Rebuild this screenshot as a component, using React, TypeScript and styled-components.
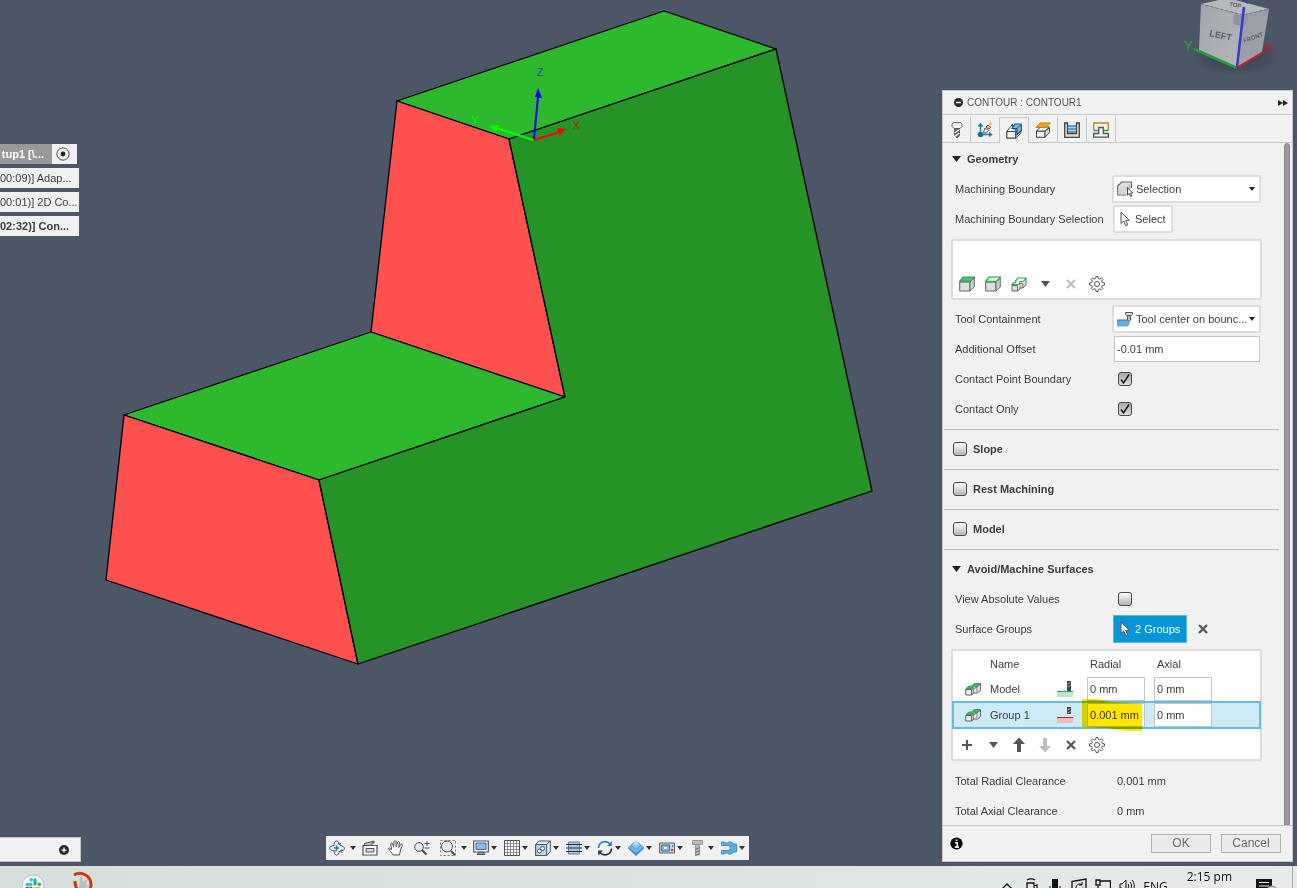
import React, { ReactNode } from 'react';
import styled, { createGlobalStyle, css } from 'styled-components';

const Global = createGlobalStyle`
  *, *::before, *::after { box-sizing: border-box; }
  body { margin: 0; background: #4c5667; }
  body, button, input, select {
    font-family: "Liberation Sans", Arial, sans-serif;
    font-size: 11px;
    color: #3c3c3c;
  }
  button { border: 0; padding: 0; background: none; cursor: pointer; }
  svg { display: block; flex: none; }
`;

/* ---------- page frame ---------- */

const App_ = styled.div`
  min-height: 100vh;
  display: flex;
  flex-direction: column;
  overflow: hidden;
`;

const Workspace = styled.main`
  position: relative;
  flex: 1;
  display: flex;
  background: #4c5667;
`;

const Scene = styled.svg`
  position: absolute;
  inset: 0;
  width: 100%;
  height: 100%;
`;

const Column = styled.div`
  position: relative;
  display: flex;
  flex-direction: column;
`;

const LeftColumn = styled(Column)`
  width: 81px;
  padding: 144px 0 4px;
  justify-content: space-between;
`;

const CenterColumn = styled(Column)`
  flex: 1;
  justify-content: flex-end;
  align-items: center;
  padding: 0 0 6px 52px;
`;

const RightColumn = styled(Column)`
  width: 355px;
  padding: 0 4px 4px 0;
`;

/* ---------- operations tree ---------- */

const Tree = styled.ul`
  list-style: none;
  margin: 0;
  padding: 0;
  display: grid;
  gap: 4px;
`;

const TreeRow = styled.li<{ $bold?: boolean; $setup?: boolean }>`
  width: ${p => (p.$setup ? 77 : 79)}px;
  height: 20px;
  display: flex;
  align-items: center;
  padding-right: ${p => (p.$setup ? 7 : 0)}px;
  overflow: hidden;
  white-space: nowrap;
  background: #f1f1f1;
  font-weight: ${p => (p.$bold ? 'bold' : 'normal')};
`;

const SetupName = styled.span`
  flex: 1;
  height: 20px;
  line-height: 20px;
  margin-right: 4px;
  padding-right: 8px;
  text-align: right;
  background: #999;
  color: #fff;
  font-weight: bold;
`;

const CommentsBar = styled.div`
  height: 25px;
  display: flex;
  align-items: center;
  justify-content: flex-end;
  padding-right: 11px;
  background: #f1f1f1;
  border: 1px solid #c4c4c4;
  border-left: 0;
`;

/* ---------- navigation toolbar ---------- */

const NavBar = styled.nav`
  display: flex;
  align-items: center;
  height: 24px;
  padding: 0 4px 0 3px;
  background: #f1f1f1;
`;

const NavButton = styled.button<{ $size?: 'plain' | 'wide' }>`
  display: flex;
  align-items: center;
  height: 24px;
  gap: ${p => (p.$size === 'wide' ? 5 : 2)}px;
  width: ${p => (p.$size === 'plain' ? 26 : p.$size === 'wide' ? 33 : 31)}px;
  &:last-child { width: auto; }
`;

/* ---------- contour panel ---------- */

const ViewCube = styled.svg`
  align-self: flex-end;
  margin-right: -4px;
`;

const Panel = styled.aside`
  display: flex;
  flex-direction: column;
  background: #f1f1f1;
  border: 1px solid #c8c8c8;
`;

const PanelHeader = styled.header`
  height: 24px;
  display: flex;
  align-items: center;
  gap: 4px;
  padding: 0 4px 0 11px;
  border-bottom: 1px solid #c8c8c8;
`;

const PanelTitle = styled.h1`
  flex: 1;
  margin: 0;
  font-size: 10px;
  font-weight: normal;
  color: #555;
`;

const Tabs = styled.div`
  height: 28px;
  display: flex;
  align-items: flex-end;
  box-shadow: inset 0 -1px #c8c8c8;
`;

const Tab = styled.button<{ $active?: boolean }>`
  width: 29px;
  height: 26px;
  display: grid;
  place-items: center;
  border-right: 1px solid #c8c8c8;
  &:first-child { width: 28px; }
  ${p =>
    p.$active &&
    css`
      background: #f1f1f1;
      border-top: 1px solid #c8c8c8;
    `}
`;

const PanelBody = styled.div`
  display: flex;
  justify-content: space-between;
`;

const Content = styled.div`
  width: 336px;
`;

const ScrollThumb = styled.div`
  width: 6px;
  margin-right: 2px;
  border-radius: 3px 3px 0 0;
  background: #999;
  border: 1px solid #8a8a8a;
`;

const Section = styled.section`
  padding: 1px 0 5px;
`;

const SectionTitle = styled.h2`
  height: 30px;
  margin: 0;
  padding-left: 9px;
  display: flex;
  align-items: center;
  gap: 6px;
  font-size: 11px;
  font-weight: bold;
`;

const ToggleSection = styled.label`
  height: 40px;
  display: flex;
  align-items: center;
  gap: 6px;
  margin-left: 1px;
  padding: 0 0 2px 9px;
  border-top: 1px solid #c0c0c0;
  font-weight: bold;
`;

const LastSection = styled(Section)`
  margin-left: 1px;
  padding: 4px 0 0;
  border-top: 1px solid #c0c0c0;
  & > * { margin-left: -1px; }
`;

const Row = styled.div`
  height: 30px;
  display: grid;
  grid-template-columns: 157px 1fr;
  align-items: center;
  padding-left: 12px;
  white-space: nowrap;
`;

const Controls = styled.div<{ $inset?: number }>`
  display: flex;
  align-items: center;
  gap: 8px;
  padding-left: ${p => p.$inset ?? 0}px;
`;

const SelectFrame = styled.div`
  position: relative;
  width: 149px;
  height: 28px;
  background: #fff;
  border: 2px solid #dcdcdc;
  border-radius: 2px;
`;

const Select = styled.select`
  appearance: none;
  width: 100%;
  height: 24px;
  padding: 0 10px 0 22px;
  border: 0;
  background: transparent;
`;

const SelectIcon = styled.span`
  position: absolute;
  left: 3px;
  top: 4px;
  pointer-events: none;
`;

const SelectArrow = styled.span`
  position: absolute;
  right: 4px;
  top: 10px;
  pointer-events: none;
`;

const PickButton = styled.button<{ $on?: boolean }>`
  height: 28px;
  display: flex;
  align-items: center;
  gap: 5px;
  background: ${p => (p.$on ? '#0696d7' : '#fff')};
  color: ${p => (p.$on ? '#fff' : '#3c3c3c')};
  border: ${p => (p.$on ? '1px solid #52b8e6' : '2px solid #dcdcdc')};
  border-radius: ${p => (p.$on ? 0 : 2)}px;
  padding: 0 ${p => (p.$on ? 6 : 5)}px;
`;

const IconButton = styled.button<{ $cell?: boolean }>`
  width: ${p => (p.$cell ? 26 : 16)}px;
  height: 20px;
  display: grid;
  place-items: center;
`;

const TextField = styled.input<{ $small?: boolean }>`
  display: block;
  width: ${p => (p.$small ? 58 : 146)}px;
  height: ${p => (p.$small ? 24 : 26)}px;
  padding: 0 2px;
  background: #fff;
  border: 1px solid #c4c4c4;
`;

const CheckFrame = styled.span`
  position: relative;
  display: block;
  width: 14px;
  height: 14px;
  svg { position: absolute; left: 0; top: 0; pointer-events: none; }
`;

const CheckInput = styled.input`
  appearance: none;
  display: block;
  width: 14px;
  height: 14px;
  margin: 0;
  border: 1px solid #4a4a4a;
  border-radius: 3px;
  background: linear-gradient(#fdfdfd, #b4b4b4);
  &:not(:checked) + svg { display: none; }
  &:checked { background: linear-gradient(#a8a8a8, #dcdcdc); }
`;

const ListBox = styled.div<{ $groups?: boolean }>`
  width: 311px;
  height: ${p => (p.$groups ? 112 : 61)}px;
  margin: 5px 0 4px 8px;
  display: flex;
  flex-direction: column;
  justify-content: space-between;
  background: #fff;
  border: 2px solid #dcdcdc;
  border-radius: 2px;
  ${LastSection} & { margin: 5px 0 5px 7px; }
`;

const ListTools = styled.div`
  margin-top: auto;
  display: flex;
  padding: 0 1px 4px;
`;

const GroupTable = styled.table`
  width: 307px;
  table-layout: fixed;
  border-collapse: collapse;
  th, td { padding: 0; text-align: left; font-weight: normal; }
  thead tr { height: 25px; }
  th:nth-child(1) { width: 37px; }
  th:nth-child(2) { width: 67px; }
  th:nth-child(3) { width: 30px; }
  th:nth-child(4), th:nth-child(5) { width: 67px; padding-left: 3px; }
`;

const GroupRow = styled.tr<{ $selected?: boolean }>`
  height: 26px;
  td:first-child { padding-left: 12px; }
  ${p =>
    p.$selected &&
    css`
      background: #cdeaf6;
      outline: 2px solid #62bce4;
      outline-offset: -1px;
    `}
`;

const Marked = styled.div`
  position: relative;
`;

const Highlighter = styled.svg`
  position: absolute;
  left: -6px;
  top: -5px;
  mix-blend-mode: multiply;
  pointer-events: none;
`;

const Output = styled.output`
  padding-left: 5px;
`;

const PanelFooter = styled.footer`
  height: 36px;
  display: flex;
  align-items: center;
  gap: 10px;
  padding: 0 11px 1px 7px;
  margin-top: -1px;
  background: #f1f1f1;
  border-top: 1px solid #c8c8c8;
  & > :first-child { margin-right: auto; }
`;

const FooterButton = styled.button`
  width: 60px;
  height: 19px;
  background: #eaeaea;
  border: 1px solid #b4b4b4;
  font-size: 12px;
  color: #6a6a6a;
`;

/* ---------- taskbar ---------- */

const Taskbar = styled.footer`
  height: 22px;
  overflow: hidden;
  display: flex;
  justify-content: space-between;
  background: linear-gradient(90deg, #d6dedb, #dfe3e3 60%, #e8eaeb);
`;

const TaskGroup = styled.div<{ $tray?: boolean }>`
  height: 40px;
  display: flex;
  align-items: center;
  gap: ${p => (p.$tray ? 8 : 26)}px;
  padding: ${p => (p.$tray ? '0 4px 0 0' : '0 0 0 21px')};
  font-family: "Open Sans", "Noto Sans", sans-serif;
  font-size: 12px;
  color: #111;
`;

const Clock = styled.time`
  align-self: flex-start;
  line-height: 22px;
  margin: 0 16px 0 11px;
`;

const ShowDesktop = styled.span`
  height: 40px;
  margin-left: 4px;
  border-left: 1px solid #a8adb0;
`;

/* ---------- icons ---------- */

const Icon = ({ children, size = 16 }: { children: ReactNode; size?: number }) => (
  <svg width={size} height={size} viewBox="0 0 16 16" fill="none" aria-hidden="true">
    {children}
  </svg>
);

const Caret = ({ color = '#333' }: { color?: string }) => (
  <svg width="6" height="4" viewBox="0 0 6 4" aria-hidden="true">
    <path d="M0 0h6L3 4z" fill={color} />
  </svg>
);

const WideCaret = ({ color = '#222' }: { color?: string }) => (
  <svg width="9" height="6" viewBox="0 0 9 6" aria-hidden="true">
    <path d="M0 0h9L4.500 6z" fill={color} />
  </svg>
);

const Cross = ({ color = '#555' }: { color?: string }) => (
  <Icon><path d="M4 4l8 8M12 4l-8 8" stroke={color} strokeWidth="2.200" /></Icon>
);

const Gear = () => (
  <Icon>
    <path
      d="M7 .5h2l.3 2 1.500.6 1.600-1.200 1.500 1.500-1.200 1.600.6 1.500 2.200.3v2.200l-2.200.3-.6 1.500 1.200 1.600-1.500 1.500-1.600-1.200-1.500.6-.3 2.200H7l-.3-2.200-1.500-.6-1.600 1.200-1.500-1.500 1.200-1.600-.6-1.500-2.200-.3V6.800l2.200-.3.6-1.500-1.200-1.600 1.500-1.500 1.600 1.200 1.500-.6z"
      stroke="#555"
    />
    <circle cx="8" cy="8" r="2.500" stroke="#555" />
  </Icon>
);

const Cursor = () => (
  <svg width="10" height="16" viewBox="0 0 10 16" aria-hidden="true">
    <path d="M1 1v11.500l2.700-2.500 2 4.800 2-.9-2-4.600h3.600z" fill="#f4f4f4" stroke="#555" />
  </svg>
);

const ToolTab = () => (
  <Icon>
    <path d="M3 2l1-1.300h8L13 2v2.500L11 6.500H5L3 4.500z" fill="#f2f2f2" stroke="#666" />
    <path d="M5.500 6.500h5v7l-2 2h-1l-2-2z" fill="#6a6a6a" stroke="#555" />
    <path d="M5.500 11l5-3.500M5.500 14.500l5-3.500" stroke="#fff" strokeWidth="1.300" />
  </Icon>
);
const AxisTab = () => (
  <Icon>
    <path d="M3.500 12V2.500M1.500 4.500l2-2.500 2 2.500M4 12.500h10M12 10.500l2.500 2-2.500 2" stroke="#1b7e99" strokeWidth="1.500" />
    <circle cx="3.500" cy="12.500" r="2.800" fill="#1b6f88" />
    <path d="M6.500 10.500l1.500-4.500 3.500 2.500-2.500 2.500z" fill="#fff" stroke="#555" />
    <path d="M9 5l3 2.200 1.500-2L11 3.200z" fill="#ddd" stroke="#444" />
    <path d="M13.500 0l.7 1.500 1.500.6-1.500.7-.7 1.500-.6-1.500-1.500-.7 1.500-.6z" fill="#f3b33c" />
  </Icon>
);
const GeometryTab = () => (
  <Icon>
    <path d="M.8 8.500h9v6.700h-9z" fill="#f4f4f4" stroke="#444" strokeWidth="1.200" />
    <path d="M.8 8.500L6.500 1.200V6H9.800v2.500z" fill="#fff" stroke="#444" />
    <path d="M9.800 15.200l5-5V7l-5 2z" fill="#d8d8d8" stroke="#444" />
    <path d="M6 5.500L9 1h6.300v6.500L11 11.500v-6z" fill="#74bdec" stroke="#14598c" strokeWidth="1.200" />
    <path d="M11 5.500l4-4" stroke="#14598c" />
  </Icon>
);
const HeightsTab = () => (
  <Icon>
    <path d="M1.500 9h8.500v6.300H1.500z" fill="#f2f2f2" stroke="#444" />
    <path d="M10 15.300l4.500-4.800V6L10 9z" fill="#d8d8d8" stroke="#444" />
    <path d="M1.500 9L5.500 5h9L10 9z" fill="#fff" stroke="#444" />
    <path d="M1 5.500L5 1h10.500l-4.500 4.500z" fill="#f5a027" stroke="#c77c08" />
  </Icon>
);
const PassesTab = () => (
  <Icon>
    <path d="M.7 1h2.800v10.500h9V1h2.800v14.300H.7z" fill="#ddd" stroke="#444" strokeWidth="1.300" />
    <path d="M4 3.500h8v7H4z" fill="#b5d8f2" />
    <path d="M4 4h8M4 7h8M4 10h8" stroke="#3a86c4" strokeWidth="1.300" />
  </Icon>
);
const LinkingTab = () => (
  <Icon>
    <path d="M.7 8V1h14.600v7" stroke="#b58a1b" strokeWidth="1.300" />
    <path d="M.5 8.500h5M10.500 8.500h5" stroke="#2ba34f" strokeWidth="1.300" />
    <path d="M.7 15.200v-3.700h5V5.500h4.600v6h5v3.700z" fill="#f1f1f1" stroke="#555" strokeWidth="1.300" />
  </Icon>
);

const SelectionIcon = () => (
  <Icon>
    <path d="M.7 14V5l4-4H14.500v6M.7 14h9" fill="#e4e4e4" stroke="#666" strokeWidth="1.200" />
    <path d="M1.500 5.500h8V13h-8z" fill="#d6d6d6" />
    <path d="M9.500 5.500l4.500-4V8h-4.500z" fill="#c8c8c8" />
    <path d="M10.500 6.500v7.500l1.800-1.500 1.200 3 1.300-.6-1.200-2.900h2z" fill="#fff" stroke="#444" />
  </Icon>
);
const ContainmentIcon = () => (
  <Icon>
    <path d="M0 9h11l2 3-2 3.500H0z" fill="#62aee4" />
    <path d="M0 9h10" stroke="#2b6fa8" />
    <path d="M8.500 1.500h7v2l-1 1h-5l-1-1z" fill="#ddd" stroke="#555" />
    <path d="M10.500 4.500h3V9l-1.500 1.500L10.500 9z" fill="#bbb" stroke="#555" />
  </Icon>
);

const FaceIcon = ({ filled }: { filled?: boolean }) => (
  <Icon>
    <path d="M.7 6h10.300v9H.7z" fill="#dedede" stroke="#666" />
    <path d="M11 15l4.300-4V1.500L11 6z" fill="#cfcfcf" stroke="#666" />
    <path d="M.7 5.500L4 1.200h11.300L11.500 5.500z" fill={filled ? '#4fc07a' : '#fff'} stroke={filled ? '#3f9a62' : '#1fae50'} strokeWidth="1.300" />
  </Icon>
);
const ChainIcon = () => (
  <Icon>
    <path d="M1 9.500h5.500v5.500H1zM6.500 15l2.500-2V9.500M7 7.500h5v4.500H9M12 12l3-3V2" fill="#dedede" stroke="#666" />
    <path d="M1 8.500L3 6.500h2L4.500 5 7 2h8l-2.500 3.500H9L8 8.500z" fill="#fff" stroke="#1fae50" strokeWidth="1.200" />
  </Icon>
);
const BodiesIcon = () => (
  <Icon>
    <path d="M.7 8.500h6v5.500h-6z" fill="#ececec" stroke="#666" />
    <path d="M6.700 14l2.300-2h3.500l3-2.500V3l-3.500 3-5.300 2.500z" fill="#e2e2e2" stroke="#666" />
    <path d="M8.500 7v5M12 6v5.500" stroke="#888" />
    <path d="M1 7.500L4 5h2.500L9 2.500h6.500L12.500 5.500H9.500L7 7.500z" fill="#41b36c" stroke="#2f8f53" strokeWidth=".8" />
  </Icon>
);
const ClearanceIcon = ({ avoid }: { avoid?: boolean }) => (
  <Icon>
    <path d="M0 11h16v5H0z" fill={avoid ? '#f3bcbc' : '#bce6c8'} />
    <path d="M0 10.500h16" stroke={avoid ? '#c4242c' : '#1fae50'} />
    <path d={avoid ? 'M10 0h4v7h-4z' : 'M10 0h4v10h-4z'} fill="#444" />
    <path d="M10.500 3l3-1.500M10.500 6l3-1.500" stroke="#aaa" />
  </Icon>
);
const Arrow = ({ down }: { down?: boolean }) => (
  <Icon>
    <path d={down ? 'M8 15.500L2 9h4V1h4v8h4z' : 'M8 .5l6 6.500h-4v8H6V7H2z'} fill={down ? '#bdbdbd' : '#555'} />
  </Icon>
);

/* navigation bar icons */
const ink = '#4a525c';
const Orbit = () => (
  <Icon>
    <path d="M5 5.500C5 3 6 .8 7.500.8 9 .8 10.500 3 10.500 5M5 10.500c0 2.500 1 4.700 2.500 4.700S10 13.500 10.500 11" stroke={ink} />
    <path d="M5 5.500C2 6 .5 7 .5 8.300c0 1.500 3 2.700 7 2.700M11 5.500c3 .5 4.500 1.500 4.500 3 0 1.200-1 1.800-4 2.500M13.500 9l-2 2 2 2M9 3l1.500 2L12 3" stroke={ink} />
    <path d="M5 8h5M7.500 5.500v5" stroke="#1673c8" strokeWidth="1.400" />
  </Icon>
);
const LookAt = () => (
  <Icon>
    <path d="M1 5.500h14v9.500H1z" fill="#fff" stroke={ink} strokeWidth="1.200" />
    <path d="M4 8.500h8v3.500H4z" fill="#d6dadf" stroke={ink} />
    <path d="M2.500 5V3.500L12 1v2h-2v2" fill="#bbb" stroke={ink} />
  </Icon>
);
const Pan = () => (
  <Icon>
    <path d="M5 15c-.5-2-4-4.500-4.500-6.500 1-.8 2 .2 3 1.300L2.800 3.500c.8-1 1.700-.5 2 .5l.9 3.200L6 1.500C6.500.5 7.700.5 8 1.500l.2 5.300L9.800 2c.6-.8 1.700-.4 1.700.6l-.8 4.900 2.200-3.300c.9-.6 1.700.2 1.400 1.200L12.500 10l-1 5z" fill="#fff" stroke={ink} />
  </Icon>
);
const Zoom = () => (
  <Icon>
    <circle cx="5" cy="7" r="4.300" fill="#e5ecf0" stroke={ink} />
    <path d="M8 10l4.500 4.500" stroke={ink} strokeWidth="2.200" />
    <path d="M13 1v5M10.500 3.500h5M10.500 8h5" stroke={ink} />
  </Icon>
);
const ZoomWindow = () => (
  <Icon>
    <path d="M.5.5h15v15H.5z" stroke="#777" strokeDasharray="2 2" />
    <circle cx="7" cy="6.500" r="5.500" fill="#e0ecea" stroke={ink} />
    <path d="M11 11l4 4" stroke={ink} strokeWidth="2.200" />
  </Icon>
);
const Display = () => (
  <Icon>
    <path d="M.7 1h14.600v11H.7z" fill="#fff" stroke={ink} strokeWidth="1.200" />
    <path d="M3 3h10v6.500H3z" fill="#8fb9e8" stroke="#3565a0" />
    <path d="M6 12h4l2 2.500H4z" fill="#999" stroke={ink} />
  </Icon>
);
const Grid = () => (
  <Icon>
    <path d="M.5.500h15v15H.500z" fill="#fff" />
    <path d="M3.500.5v15M6.500.5v15M9.500.5v15M12.500.5v15M.5 3.500h15M.5 6.500h15M.5 9.500h15M.5 12.500h15" stroke="#8a8e94" />
    <path d="M.5.500h15v15H.500z" stroke="#4a525c" />
  </Icon>
);
const Inspect = () => (
  <Icon>
    <path d="M.7 4.500L4 1h11.300v10.500l-3.600 4h-11z" fill="#e8eef4" stroke={ink} />
    <path d="M.7 4.500h11v11H.7zM11.700 4.500L15.300 1" fill="#b9d4ee" stroke={ink} />
    <circle cx="4.500" cy="11" r="2" fill="#fff" stroke={ink} /><circle cx="7.500" cy="8.500" r="2" fill="#fff" stroke={ink} />
  </Icon>
);
const Stock = () => (
  <Icon>
    <path d="M2.500 2h11v12h-11z" fill="#a9c4e2" stroke="#6b8098" />
    <path d="M0 4.500h16M0 8h16M0 11.500h16" stroke="#26374a" strokeWidth="1.200" />
  </Icon>
);
const Sync = () => (
  <Icon>
    <path d="M1.500 8A6.500 6.500 0 0 1 13 4" stroke="#2c7ad0" strokeWidth="1.600" /><path d="M14.800 1v5H10z" fill="#2c7ad0" />
    <path d="M14.500 8.500A6.500 6.500 0 0 1 3 12.500" stroke="#1e3355" strokeWidth="1.600" /><path d="M1.200 15.500v-5H6z" fill="#1e3355" />
  </Icon>
);
const Layers = () => (
  <Icon>
    <path d="M0 8.500L8 2l8 6.500L8 16z" fill="#3989c6" />
    <path d="M0 7.500L8 2l8 5.500L8 13.500z" fill="#6db5e6" stroke="#3f8bc2" strokeWidth=".7" />
    <path d="M3 5L8 1l5 4-5 4.500z" fill="#8cc8f0" stroke="#3f8bc2" strokeWidth=".7" />
    <path d="M5.500 3L8 .5 10.500 3 8 5.500z" fill="#b6def7" />
  </Icon>
);
const Machine = () => (
  <Icon>
    <path d="M.5 3h15v10H.500z" fill="#cdd2d8" stroke="#5b6169" />
    <path d="M2.500 5h8v6h-8z" fill="#76b6e4" stroke="#4c6c88" />
    <path d="M5 7h3v2H5z" fill="#fff" /><path d="M12 9h2v2h-2z" fill="#d33" /><path d="M13 5h1v2h-1z" fill="#2c7ad0" />
  </Icon>
);
const Bolt = () => (
  <Icon>
    <path d="M2.500.5h10v4h-10z" fill="#b9bcbf" stroke="#95999d" />
    <path d="M5.500 4.500h4V15h-4z" fill="#b2b5b8" stroke="#95999d" />
    <path d="M5 9.500l5-2M5 12.500l5-2M5 15.500l5-2" stroke="#777" />
  </Icon>
);
const Fixture = () => (
  <Icon>
    <path d="M.5 2h3l1 1h2l1-1h3l1.500 2H15.500v8H12l-1.500 2h-3l-1-1h-2l-1 1h-3v-3.500H7c3 0 3-5 0-5H.5z" fill="#5eaee2" stroke="#3f8fc6" />
  </Icon>
);

/* ---------- composed controls ---------- */

const Check = ({ id, checked }: { id?: string; checked?: boolean }) => (
  <CheckFrame>
    <CheckInput type="checkbox" id={id} defaultChecked={checked} />
    <svg width="14" height="14" viewBox="0 0 14 14" fill="none" aria-hidden="true">
      <path d="M3 7.500L5.500 11 11 2.500" stroke="#111" strokeWidth="1.400" />
    </svg>
  </CheckFrame>
);

const CheckRow = ({ id, label, checked }: { id: string; label: string; checked?: boolean }) => (
  <Row>
    <label htmlFor={id}>{label}</label>
    <Controls $inset={6}><Check id={id} checked={checked} /></Controls>
  </Row>
);

const SelectRow = ({ id, label, value, icon }: { id: string; label: string; value: string; icon: ReactNode }) => (
  <Row>
    <label htmlFor={id}>{label}</label>
    <SelectFrame>
      <SelectIcon>{icon}</SelectIcon>
      <Select id={id}><option>{value}</option></Select>
      <SelectArrow><Caret color="#222" /></SelectArrow>
    </SelectFrame>
  </Row>
);

const navItems: { name: string; icon: ReactNode; size?: 'plain' | 'wide' }[] = [
  { name: 'Orbit', icon: <Orbit />, size: 'wide' },
  { name: 'Look at', icon: <LookAt />, size: 'plain' },
  { name: 'Pan', icon: <Pan />, size: 'plain' },
  { name: 'Zoom', icon: <Zoom />, size: 'plain' },
  { name: 'Zoom window', icon: <ZoomWindow />, size: 'wide' },
  { name: 'Display settings', icon: <Display /> },
  { name: 'Grid and snaps', icon: <Grid /> },
  { name: 'Viewports', icon: <Inspect /> },
  { name: 'Stock', icon: <Stock /> },
  { name: 'Refresh', icon: <Sync /> },
  { name: 'Layers', icon: <Layers /> },
  { name: 'Machine', icon: <Machine /> },
  { name: 'Tool', icon: <Bolt /> },
  { name: 'Fixture', icon: <Fixture /> },
];

const tabs = [
  { name: 'Tool', icon: <ToolTab /> },
  { name: 'Setup', icon: <AxisTab /> },
  { name: 'Geometry', icon: <GeometryTab /> },
  { name: 'Heights', icon: <HeightsTab /> },
  { name: 'Passes', icon: <PassesTab /> },
  { name: 'Linking', icon: <LinkingTab /> },
];

const ModelScene = () => (
  <Scene viewBox="0 0 1297 866" preserveAspectRatio="xMinYMin meet" role="img" aria-label="Part model">
    <g stroke="#000" strokeWidth="1.300" strokeLinejoin="round">
      <path d="M397 101L664 11l112 38-267 90z" fill="#2eb82e" />
      <path d="M397 101l112 38 56 258-194-65z" fill="#ff5050" />
      <path d="M124 415l247-83 194 65-246 83z" fill="#2eb82e" />
      <path d="M124 415l195 65 39 184-252-84z" fill="#ff5050" />
      <path d="M509 139L776 49l96 442-514 173-39-184 246-83z" fill="#269326" />
    </g>
    <g fill="none" strokeWidth="2">
      <path d="M534 140l26-8" stroke="#f00" /><path d="M566 129l-9-1 3 7z" fill="#f00" stroke="none" />
      <path d="M533 140l-36-12" stroke="#0f0" /><path d="M489 126l10-1-3 7z" fill="#0f0" stroke="none" />
      <path d="M534 139l4-42" stroke="#00f" /><path d="M538 88l4 10-7-1z" fill="#00f" stroke="none" />
    </g>
    <g fontFamily="Liberation Sans" fontSize="11" textAnchor="middle">
      <text x="540" y="76" fill="#1c4fa0">Z</text>
      <text x="475" y="124" fill="#0f0">Y</text>
      <text x="576" y="129" fill="#c02010">X</text>
    </g>
  </Scene>
);

const Cube = () => (
  <ViewCube width="127" height="90" viewBox="0 0 127 90" role="img" aria-label="View cube">
    <defs>
      <linearGradient id="cubeLeft" x1="0" y1="0" x2="1" y2="1">
        <stop offset="0" stopColor="#a2a5ac" /><stop offset="1" stopColor="#b4b6bb" />
      </linearGradient>
      <radialGradient id="cubeShadow"><stop offset="0" stopColor="#303948" /><stop offset="1" stopColor="#303948" stopOpacity="0" /></radialGradient>
    </defs>
    <ellipse cx="66" cy="56" rx="46" ry="20" fill="url(#cubeShadow)" />
    <path d="M31 4l27-6 41 11-26 6z" fill="#b7b9be" />
    <path d="M31 4l42 11-6 53-38-18z" fill="url(#cubeLeft)" />
    <path d="M73 15l26-6-7 43-25 16z" fill="#9c9fa7" />
    <path d="M31 4l42 11 26-6" fill="none" stroke="#6f737b" strokeDasharray="3 2" />
    <path d="M64 14l9 2 5-1-1 10-6 1-8-2z" fill="#8f94a2" />
    <g fontFamily="Liberation Sans" fontWeight="bold" fill="#5b5f68">
      <text x="39" y="36" fontSize="9" transform="rotate(12 39 36)">LEFT</text>
      <text x="74" y="43" fontSize="6" transform="rotate(-20 74 43)">FRONT</text>
      <text x="59" y="6" fontSize="6" transform="rotate(10 59 6)">TOP</text>
    </g>
    <path d="M67 68L24 49" stroke="#2a9a33" strokeWidth="2.500" />
    <path d="M67 68l27-16" stroke="#b0262c" strokeWidth="2.500" />
    <path d="M67 67l7-60" stroke="#3a3ac8" strokeWidth="2.500" />
    <path d="M73 0l5 3" stroke="#3a3ac8" strokeWidth="1.500" />
    <g fontFamily="Liberation Sans" fontSize="13">
      <text x="14" y="50" fill="#2a9a33" stroke="#2a9a33" strokeWidth=".5">Y</text>
      <text x="94" y="53" fill="#b0262c" stroke="#b0262c" strokeWidth=".5">X</text>
    </g>
  </ViewCube>
);

export default function App() {
  return (
    <App_>
      <Global />
      <Workspace>
        <ModelScene />

        <LeftColumn>
          <Tree>
            <TreeRow $setup>
              <SetupName>tup1 [\...</SetupName>
              <Icon size={14}>
                <circle cx="8" cy="8" r="7" stroke="#333" /><circle cx="8" cy="8" r="2.800" fill="#222" />
              </Icon>
            </TreeRow>
            <TreeRow>00:09)] Adap...</TreeRow>
            <TreeRow>00:01)] 2D Co...</TreeRow>
            <TreeRow $bold>02:32)] Con...</TreeRow>
          </Tree>
          <CommentsBar>
            <button aria-label="Add comment">
              <Icon size={10}><circle cx="8" cy="8" r="8" fill="#2b2b2b" /><path d="M8 4v8M4 8h8" stroke="#fff" strokeWidth="2" /></Icon>
            </button>
          </CommentsBar>
        </LeftColumn>

        <CenterColumn>
          <NavBar>
            {navItems.map(n => (
              <NavButton key={n.name} $size={n.size} aria-label={n.name}>
                {n.icon}
                {n.size !== 'plain' && <Caret />}
              </NavButton>
            ))}
          </NavBar>
        </CenterColumn>

        <RightColumn>
          <Cube />
          <Panel>
            <PanelHeader>
              <Icon size={9}><circle cx="8" cy="8" r="8" fill="#2b2b2b" /><path d="M3.500 8h9" stroke="#fff" strokeWidth="2.500" /></Icon>
              <PanelTitle>CONTOUR : CONTOUR1</PanelTitle>
              <svg width="10" height="6" viewBox="0 0 10 6" aria-hidden="true"><path d="M0 0l5 3-5 3zM5 0l5 3-5 3z" fill="#222" /></svg>
            </PanelHeader>
            <Tabs role="tablist">
              {tabs.map((t, i) => (
                <Tab key={t.name} role="tab" aria-label={t.name} aria-selected={i === 2} $active={i === 2}>{t.icon}</Tab>
              ))}
            </Tabs>
            <PanelBody>
              <Content>
                <Section>
                  <SectionTitle><WideCaret />Geometry</SectionTitle>
                  <SelectRow id="boundary" label="Machining Boundary" value="Selection" icon={<SelectionIcon />} />
                  <Row>
                    <span>Machining Boundary Selection</span>
                    <Controls $inset={1}><PickButton><Cursor />Select</PickButton></Controls>
                  </Row>
                  <ListBox>
                    <ListTools>
                      <IconButton $cell aria-label="Face"><FaceIcon filled /></IconButton>
                      <IconButton $cell aria-label="Loop"><FaceIcon /></IconButton>
                      <IconButton $cell aria-label="Chain"><ChainIcon /></IconButton>
                      <IconButton $cell aria-label="More"><WideCaret color="#555" /></IconButton>
                      <IconButton $cell aria-label="Remove"><Cross color="#bdbdbd" /></IconButton>
                      <IconButton $cell aria-label="Settings"><Gear /></IconButton>
                    </ListTools>
                  </ListBox>
                  <SelectRow id="containment" label="Tool Containment" value="Tool center on bounc..." icon={<ContainmentIcon />} />
                  <Row>
                    <label htmlFor="offset">Additional Offset</label>
                    <Controls $inset={2}><TextField id="offset" defaultValue="-0.01 mm" /></Controls>
                  </Row>
                  <CheckRow id="cpb" label="Contact Point Boundary" checked />
                  <CheckRow id="co" label="Contact Only" checked />
                </Section>
                {['Slope', 'Rest Machining', 'Model'].map(s => (
                  <ToggleSection key={s}><Check />{s}</ToggleSection>
                ))}
                <LastSection>
                  <SectionTitle><WideCaret />Avoid/Machine Surfaces</SectionTitle>
                  <CheckRow id="abs" label="View Absolute Values" />
                  <Row>
                    <span>Surface Groups</span>
                    <Controls $inset={1}>
                      <PickButton $on><Cursor />2 Groups</PickButton>
                      <IconButton aria-label="Clear groups"><Cross /></IconButton>
                    </Controls>
                  </Row>
                  <ListBox $groups>
                    <GroupTable>
                      <thead>
                        <tr><th /><th>Name</th><th /><th>Radial</th><th>Axial</th><th /></tr>
                      </thead>
                      <tbody>
                        <GroupRow>
                          <td><BodiesIcon /></td>
                          <td>Model</td>
                          <td><ClearanceIcon /></td>
                          <td><TextField $small aria-label="Model radial" defaultValue="0 mm" /></td>
                          <td><TextField $small aria-label="Model axial" defaultValue="0 mm" /></td>
                          <td />
                        </GroupRow>
                        <GroupRow $selected>
                          <td><BodiesIcon /></td>
                          <td>Group 1</td>
                          <td><ClearanceIcon avoid /></td>
                          <td>
                            <Marked>
                              <TextField $small aria-label="Group 1 radial" defaultValue="0.001 mm" />
                              <Highlighter width="62" height="34" viewBox="0 0 62 34">
                                <path d="M1 1h15l13 3 32 2v27H46l-20-3-25-1z" fill="#ffe600" />
                              </Highlighter>
                            </Marked>
                          </td>
                          <td><TextField $small aria-label="Group 1 axial" defaultValue="0 mm" /></td>
                          <td />
                        </GroupRow>
                      </tbody>
                    </GroupTable>
                    <ListTools>
                      <IconButton $cell aria-label="Add"><Icon><path d="M8 3v10M3 8h10" stroke="#555" strokeWidth="2.200" /></Icon></IconButton>
                      <IconButton $cell aria-label="More"><WideCaret color="#555" /></IconButton>
                      <IconButton $cell aria-label="Move up"><Arrow /></IconButton>
                      <IconButton $cell aria-label="Move down"><Arrow down /></IconButton>
                      <IconButton $cell aria-label="Remove"><Cross /></IconButton>
                      <IconButton $cell aria-label="Settings"><Gear /></IconButton>
                    </ListTools>
                  </ListBox>
                  <Row><span>Total Radial Clearance</span><Output>0.001 mm</Output></Row>
                  <Row><span>Total Axial Clearance</span><Output>0 mm</Output></Row>
                </LastSection>
              </Content>
              <ScrollThumb />
            </PanelBody>
            <PanelFooter>
              <Icon size={13}>
                <circle cx="8" cy="8" r="7.500" fill="#000" />
                <path d="M6 7h3v5M6 12.500h5M7 4h2" stroke="#fff" strokeWidth="2" />
              </Icon>
              <FooterButton>OK</FooterButton>
              <FooterButton>Cancel</FooterButton>
            </PanelFooter>
          </Panel>
        </RightColumn>
      </Workspace>

      <Taskbar>
        <TaskGroup>
          <svg width="24" height="24" viewBox="0 0 24 24" aria-label="Slack">
            <circle cx="12" cy="12" r="11" fill="#fff" stroke="#b9bfbd" />
            <g strokeWidth="3.400" strokeLinecap="round">
              <path d="M6 10.500h4M10.300 5.500v.5" stroke="#36c5f0" /><path d="M14 6v4M18 10.300h.5" stroke="#2eb67d" />
              <path d="M14 14.500h4M14 18v.5" stroke="#ecb22e" /><path d="M10 14.500v4M6 14.500h.5" stroke="#e01e5a" />
            </g>
          </svg>
          <svg width="24" height="32" viewBox="0 0 24 32" aria-label="App">
            <path d="M3 5c7-4 17 0 17 10 0 3-2 6-4 8M4 11c0 6 3 11 8 13" fill="none" stroke="#cf3a0c" strokeWidth="3" />
            <path d="M10 4l2 8 5-3-2 5 4 3-6 1-3 5-2-5z" fill="#b9bcbd" />
          </svg>
        </TaskGroup>
        <TaskGroup $tray>
          <Icon><path d="M3 11l5-5 5 5" stroke="#111" strokeWidth="1.400" /></Icon>
          <Icon><path d="M4 2c2-1.500 6-1.500 8 0M4 5h7v9H4zM11 8l3-1v6l-3-1" stroke="#111" strokeWidth="1.300" /></Icon>
          <Icon><path d="M5 1h6v9H5z" fill="#111" /><path d="M3 8v3h10V8M8 11v4" stroke="#111" /></Icon>
          <Icon><path d="M1 3.500L15 1v13H1z" stroke="#111" strokeWidth="1.300" /><path d="M5 10c0-4 4-5 6-3M11 4v3H8" stroke="#111" /><path d="M9 12l3-4 3 4z" fill="#f2a020" /></Icon>
          <Icon><path d="M5 3h10.500v9H3V8M1 2h4v5H1z" stroke="#111" strokeWidth="1.300" /></Icon>
          <Icon><path d="M1 6h2l4-4v12l-4-4H1zM9 6c1 1 1 3 0 4M11 4c2 2 2 6 0 8M13 2c3 3 3 9 0 12" stroke="#111" /></Icon>
          <span>ENG</span>
          <Clock>2:15 pm</Clock>
          <svg width="24" height="16" viewBox="0 0 24 16" aria-label="Notifications">
            <path d="M0 1h16v12H8l-4 3v-3H0z" fill="#111" /><path d="M3 4.500h10M3 8h10" stroke="#e8eaeb" />
            <circle cx="16" cy="14" r="6" fill="#c9cccd" stroke="#888" />
          </svg>
          <ShowDesktop />
        </TaskGroup>
      </Taskbar>
    </App_>
  );
}
